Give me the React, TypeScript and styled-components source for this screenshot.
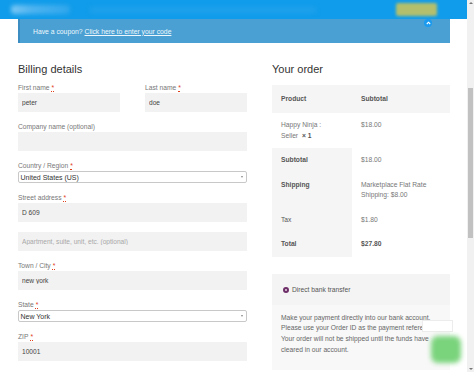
import React from "react";
import styled, { createGlobalStyle } from "styled-components";

const Global = createGlobalStyle`
  html, body { margin: 0; padding: 0; width: 474px; height: 372px; overflow: hidden; background: #fff; }
  body { font-family: "Liberation Sans", Arial, sans-serif; }
  * { box-sizing: border-box; }
`;

const Page = styled.div`
  position: relative;
  display: flex;
  width: 474px;
  height: 372px;
  overflow: hidden;
`;

const Main = styled.div`
  flex: 1;
  min-width: 0;
  display: flex;
  flex-direction: column;
`;

const TopBar = styled.header`
  flex: none;
  height: 19px;
  background: #109cea;
  display: flex;
  align-items: center;
  padding: 0 30px 0 11px;
  gap: 20px;
`;

const BlurLogo = styled.div`
  width: 59px;
  height: 9px;
  border-radius: 4px;
  background: linear-gradient(90deg, #7cc8f4 0%, #4fb3ef 35%, #2fa6ec 100%);
  filter: blur(2px);
`;

const BlurNav = styled.div`
  flex: 1;
  height: 6px;
  margin-right: 60px;
  background: #1ea0eb;
  filter: blur(2px);
`;

const BlurButton = styled.div`
  width: 41px;
  height: 13px;
  border-radius: 2px;
  background: #b3bf6c;
  filter: blur(1.5px);
`;

const Content = styled.div`
  padding: 0 17px 0 18px;
`;

const CouponBar = styled.div`
  position: relative;
  height: 24px;
  background: #4aa0d3;
  border-left: 2px solid #3b8dc2;
  display: flex;
  align-items: center;
  padding-left: 13px;
  color: #eef7fc;
  font-size: 6.8px;
`;

const CouponLink = styled.a`
  color: #eef7fc;
  text-decoration: underline;
  margin-left: 2px;
`;

const ToggleBadge = styled.span`
  position: absolute;
  left: 404px;
  top: 0;
  width: 8px;
  height: 8px;
  border-radius: 50%;
  background: #1a9bef;
  display: flex;
  align-items: center;
  justify-content: center;
`;

const Columns = styled.div`
  display: grid;
  grid-template-columns: 229px 178px;
  column-gap: 25px;
  margin-top: 20.7px;
`;

const Heading = styled.h3`
  margin: 0;
  font-size: 11px;
  line-height: 11px;
  font-weight: 400;
  color: #333;
`;

const Fields = styled.div`
  margin-top: 7.8px;
`;

const Field = styled.div`
  margin-bottom: 9px;
`;

const NameRow = styled.div`
  display: grid;
  grid-template-columns: 102px 102px;
  column-gap: 25px;
`;

const Stack = styled.div`
  display: flex;
  flex-direction: column;
  gap: 10px;
`;

const Label = styled.label`
  display: block;
  height: 11px;
  font-size: 6.7px;
  line-height: 11px;
  color: #777;
  white-space: nowrap;
`;

const Req = styled.abbr`
  color: #e2401c;
  text-decoration: underline dotted;
  margin-left: 2px;
`;

const Input = styled.input`
  display: block;
  width: 100%;
  height: 19px;
  border: 0;
  outline: none;
  background: #f2f2f2;
  padding: 0 4px;
  font-family: "Liberation Sans", Arial, sans-serif;
  font-size: 6.6px;
  color: #444;
  &::placeholder { color: #a8a8a8; }
`;

const SelectBox = styled.div`
  height: 12px;
  border: 1px solid #c8c8c8;
  border-radius: 2px;
  background: #fff;
  display: flex;
  align-items: center;
  justify-content: space-between;
  padding: 0 3px 0 1.5px;
  font-size: 7px;
  color: #333;
`;

const Caret = styled.span`
  width: 0;
  height: 0;
  border-left: 1.5px solid transparent;
  border-right: 1.5px solid transparent;
  border-top: 2px solid #888;
`;

const OrderTable = styled.table`
  width: 100%;
  margin-top: 10.3px;
  border-collapse: collapse;
  font-size: 6.7px;
  line-height: 10.5px;
  table-layout: fixed;
`;

const HeadRow = styled.tr`
  background: #f5f5f5;
`;

const Th = styled.th<{ $head?: boolean; $light?: boolean }>`
  text-align: left;
  vertical-align: top;
  padding: ${(p) => (p.$head ? "9px" : "7px")} 9px;
  font-weight: ${(p) => (p.$light ? 400 : 700)};
  color: #555;
  background: ${(p) => (p.$head ? "transparent" : "#f5f5f5")};
`;

const Td = styled.td<{ $strong?: boolean }>`
  vertical-align: top;
  padding: 7px 9px;
  color: ${(p) => (p.$strong ? "#555" : "#777")};
  font-weight: ${(p) => (p.$strong ? 700 : 400)};
  background: #fff;
`;

const Qty = styled.strong`
  color: #555;
  margin-left: 2px;
`;

const PaymentBox = styled.div`
  margin-top: 17.3px;
  background: #f4f4f4;
  font-size: 6.7px;
`;

const Method = styled.div`
  display: flex;
  align-items: center;
  gap: 3px;
  height: 30.5px;
  padding: 0 11px;
  color: #555;
`;

const Radio = styled.span`
  width: 6px;
  height: 6px;
  border-radius: 50%;
  border: 2px solid #6e2f69;
  background: #e6d6e4;
`;

const Description = styled.div`
  background: #f8f8f8;
  padding: 8px 9px 14px;
  color: #666;
  line-height: 10.7px;
`;

const Scrollbar = styled.div`
  flex: none;
  width: 7px;
  height: 372px;
  background: #f1f1f1;
  display: flex;
  flex-direction: column;
  align-items: center;
`;

const ScrollArrow = styled.span<{ $down?: boolean }>`
  margin-top: ${(p) => (p.$down ? "auto" : "2px")};
  margin-bottom: ${(p) => (p.$down ? "2px" : "0")};
  width: 0;
  height: 0;
  border-left: 2px solid transparent;
  border-right: 2px solid transparent;
  ${(p) => (p.$down ? "border-top: 2px solid #777;" : "border-bottom: 2px solid #777;")}
`;

const Thumb = styled.div`
  margin-top: 84px;
  width: 5px;
  height: 150px;
  background: #c1c1c1;
`;

const Tooltip = styled.div`
  position: absolute;
  left: 422px;
  top: 320px;
  width: 31px;
  height: 12px;
  background: #fff;
  border: 1px solid #ececec;
`;

const ChatBlob = styled.div`
  position: absolute;
  left: 431px;
  top: 336px;
  width: 30px;
  height: 27px;
  border-radius: 7px;
  background: #7ad47c;
  filter: blur(2.5px);
`;

export default function App() {
  return (
    <>
      <Global />
      <Page>
        <Main>
          <TopBar>
            <BlurLogo />
            <BlurNav />
            <BlurButton />
          </TopBar>
          <Content>
            <CouponBar>
              Have a coupon? <CouponLink>Click here to enter your code</CouponLink>
              <ToggleBadge>
                <svg width="5" height="4" viewBox="0 0 5 4">
                  <path d="M0.8 3 L2.5 1.2 L4.2 3" stroke="#fff" strokeWidth="1.1" fill="none" />
                </svg>
              </ToggleBadge>
            </CouponBar>
            <Columns>
              <div>
                <Heading>Billing details</Heading>
                <Fields>
                  <NameRow>
                    <Field>
                      <Label>First name<Req title="required">*</Req></Label>
                      <Input defaultValue="peter" readOnly />
                    </Field>
                    <Field>
                      <Label>Last name<Req title="required">*</Req></Label>
                      <Input defaultValue="doe" readOnly />
                    </Field>
                  </NameRow>
                  <Field>
                    <Label>Company name (optional)</Label>
                    <Input readOnly />
                  </Field>
                  <Field>
                    <Label>Country / Region<Req title="required">*</Req></Label>
                    <SelectBox>
                      <span>United States (US)</span>
                      <Caret />
                    </SelectBox>
                  </Field>
                  <Field>
                    <Label>Street address<Req title="required">*</Req></Label>
                    <Stack>
                      <Input defaultValue="D 609" readOnly />
                      <Input placeholder="Apartment, suite, unit, etc. (optional)" readOnly />
                    </Stack>
                  </Field>
                  <Field>
                    <Label>Town / City<Req title="required">*</Req></Label>
                    <Input defaultValue="new york" readOnly />
                  </Field>
                  <Field>
                    <Label>State<Req title="required">*</Req></Label>
                    <SelectBox>
                      <span>New York</span>
                      <Caret />
                    </SelectBox>
                  </Field>
                  <Field>
                    <Label>ZIP<Req title="required">*</Req></Label>
                    <Input defaultValue="10001" readOnly />
                  </Field>
                </Fields>
              </div>
              <div>
                <Heading>Your order</Heading>
                <OrderTable>
                  <colgroup>
                    <col style={{ width: "80px" }} />
                    <col />
                  </colgroup>
                  <thead>
                    <HeadRow>
                      <Th $head>Product</Th>
                      <Th $head>Subtotal</Th>
                    </HeadRow>
                  </thead>
                  <tbody>
                    <tr>
                      <Td>
                        Happy Ninja : Seller{"\u00a0"}<Qty>×{"\u00a0"}1</Qty>
                      </Td>
                      <Td>$18.00</Td>
                    </tr>
                  </tbody>
                  <tfoot>
                    <tr>
                      <Th>Subtotal</Th>
                      <Td>$18.00</Td>
                    </tr>
                    <tr>
                      <Th>Shipping</Th>
                      <Td>Marketplace Flat Rate Shipping: $8.00</Td>
                    </tr>
                    <tr>
                      <Th $light>Tax</Th>
                      <Td>$1.80</Td>
                    </tr>
                    <tr>
                      <Th>Total</Th>
                      <Td $strong>$27.80</Td>
                    </tr>
                  </tfoot>
                </OrderTable>
                <PaymentBox>
                  <Method>
                    <Radio />
                    <span>Direct bank transfer</span>
                  </Method>
                  <Description>
                    Make your payment directly into our bank account. Please use your Order ID as the payment reference. Your order will not be shipped until the funds have cleared in our account.
                  </Description>
                </PaymentBox>
              </div>
            </Columns>
          </Content>
        </Main>
        <Scrollbar>
          <ScrollArrow />
          <Thumb />
          <ScrollArrow $down />
        </Scrollbar>
        <Tooltip />
        <ChatBlob />
      </Page>
    </>
  );
}
